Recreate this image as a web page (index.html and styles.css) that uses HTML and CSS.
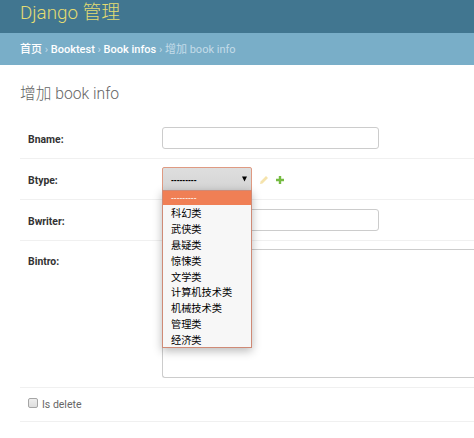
FILE: index.html
```html
<!DOCTYPE html>
<html lang="zh">
<head>
<meta charset="utf-8">
<title>增加 book info</title>
<link rel="stylesheet" href="styles.css">
</head>
<body>
<header class="header"><span class="brand">Django 管理</span></header>
<nav class="breadcrumbs"><a>首页</a> › <a>Booktest</a> › <a>Book infos</a> › 增加 book info</nav>
<main class="content">
  <h1 class="title">增加 book info</h1>
  <form class="form">
    <div class="row"><label class="label">Bname:</label><div class="input"></div></div>
    <div class="row row-select">
      <label class="label">Btype:</label>
      <div class="select">
        <span class="dashes">---------</span>
        <svg class="arrow" viewBox="0 0 6 6"><path d="M0 0H6L3 6Z"/></svg>
        <ul class="menu">
          <li class="option selected">---------</li>
          <li class="option">科幻类</li>
          <li class="option">武侠类</li>
          <li class="option">悬疑类</li>
          <li class="option">惊悚类</li>
          <li class="option">文学类</li>
          <li class="option">计算机技术类</li>
          <li class="option">机械技术类</li>
          <li class="option">管理类</li>
          <li class="option">经济类</li>
        </ul>
      </div>
      <svg class="icon pencil" viewBox="0 0 10 10"><path d="M1 9L1.6 6.5L7 1.1L9 3.1L3.5 8.5Z"/></svg>
      <svg class="icon plus" viewBox="0 0 10 10"><path d="M3.8 1H6.2V3.8H9V6.2H6.2V9H3.8V6.2H1V3.8H3.8Z"/></svg>
    </div>
    <div class="row"><label class="label">Bwriter:</label><div class="input"></div></div>
    <div class="row row-text"><label class="label">Bintro:</label><div class="textarea"></div></div>
    <div class="row row-check"><span class="checkbox"></span><label class="check-label">Is delete</label></div>
  </form>
</main>
</body>
</html>
```
FILE: styles.css
```css
* { box-sizing: border-box; }
body {
  margin: 0;
  height: 438px;
  overflow: hidden;
  background: #fff;
  color: #333;
  font-family: Roboto, "Noto Sans CJK SC", sans-serif;
  font-size: 10.5px;
}
.header {
  height: 33px;
  padding-left: 20px;
  background: #417690;
  color: #e4dd72;
}
.brand {
  display: block;
  font-size: 18.8px;
  font-weight: 300;
  line-height: 27px;
  white-space: nowrap;
}
.breadcrumbs {
  height: 32px;
  padding-left: 20px;
  background: #79aec8;
  color: #c4dce8;
  font-size: 11px;
  line-height: 34px;
  white-space: nowrap;
}
.breadcrumbs a { color: #fff; font-weight: 500; }
.content { padding-left: 20px; }
.title {
  margin: 0;
  height: 53px;
  padding-top: 17px;
  color: #666;
  font-size: 15.7px;
  font-weight: 300;
  line-height: 23px;
}
.row {
  display: flex;
  align-items: flex-start;
  height: 41px;
  padding: 9px 0 0 8px;
  border-bottom: 1px solid #f0f0f0;
}
.label {
  flex: none;
  width: 134px;
  font-size: 10.4px;
  font-weight: 700;
  line-height: 25px;
}
.input {
  width: 217px;
  height: 22px;
  border: 1px solid #ccc;
  border-radius: 3px;
}
.row-select { padding-top: 8px; }
.row-select .label { line-height: 27px; }
.select {
  position: relative;
  display: flex;
  align-items: center;
  justify-content: space-between;
  width: 90px;
  height: 24px;
  padding: 0 4px 0 8px;
  border: 1px solid #df9a82;
  border-radius: 2px 2px 0 0;
  background: linear-gradient(#dedede, #d5d5d5);
  color: #000;
}
.dashes { padding-top: 2px; font-family: "Liberation Sans", sans-serif; font-size: 8.5px; font-weight: 700; }
.arrow { width: 5px; height: 6px; }
.menu {
  position: absolute;
  z-index: 2;
  top: 22px;
  left: -1px;
  width: 90px;
  height: 158px;
  margin: 0;
  padding: 0;
  border: 1px solid #cf8a76;
  background: #f7f7f7;
  box-shadow: 0 3px 9px rgba(0, 0, 0, 0.28);
  list-style: none;
}
.option {
  height: 15.8px;
  padding-left: 8px;
  font-family: "Noto Sans CJK SC", sans-serif;
  font-size: 10.2px;
  line-height: 15.8px;
  white-space: nowrap;
}
.selected {
  height: 14.4px;
  background: #f07f55;
  color: #fff;
  font-family: "Liberation Sans", sans-serif;
  font-size: 8.5px;
  line-height: 15px;
}
.icon { width: 10px; height: 10px; margin: 8px 0 0 6px; }
.pencil { margin-left: 7px; fill: #f5e3ac; }
.plus { fill: #76bb42; }
.row-text { height: 147px; padding-top: 8px; }
.row-text .label { line-height: 26px; }
.textarea {
  flex: 1;
  height: 129px;
  border: 1px solid #ccc;
  border-right: 0;
  border-radius: 3px 0 0 3px;
}
.row-check { height: 34px; padding-top: 9px; }
.checkbox {
  width: 10px;
  height: 10px;
  margin-top: 1px;
  border: 1px solid #a5a5a5;
  border-radius: 2px;
  background: linear-gradient(#eee, #dedede);
}
.check-label { margin-left: 4px; color: #666; line-height: 15px; }
```
